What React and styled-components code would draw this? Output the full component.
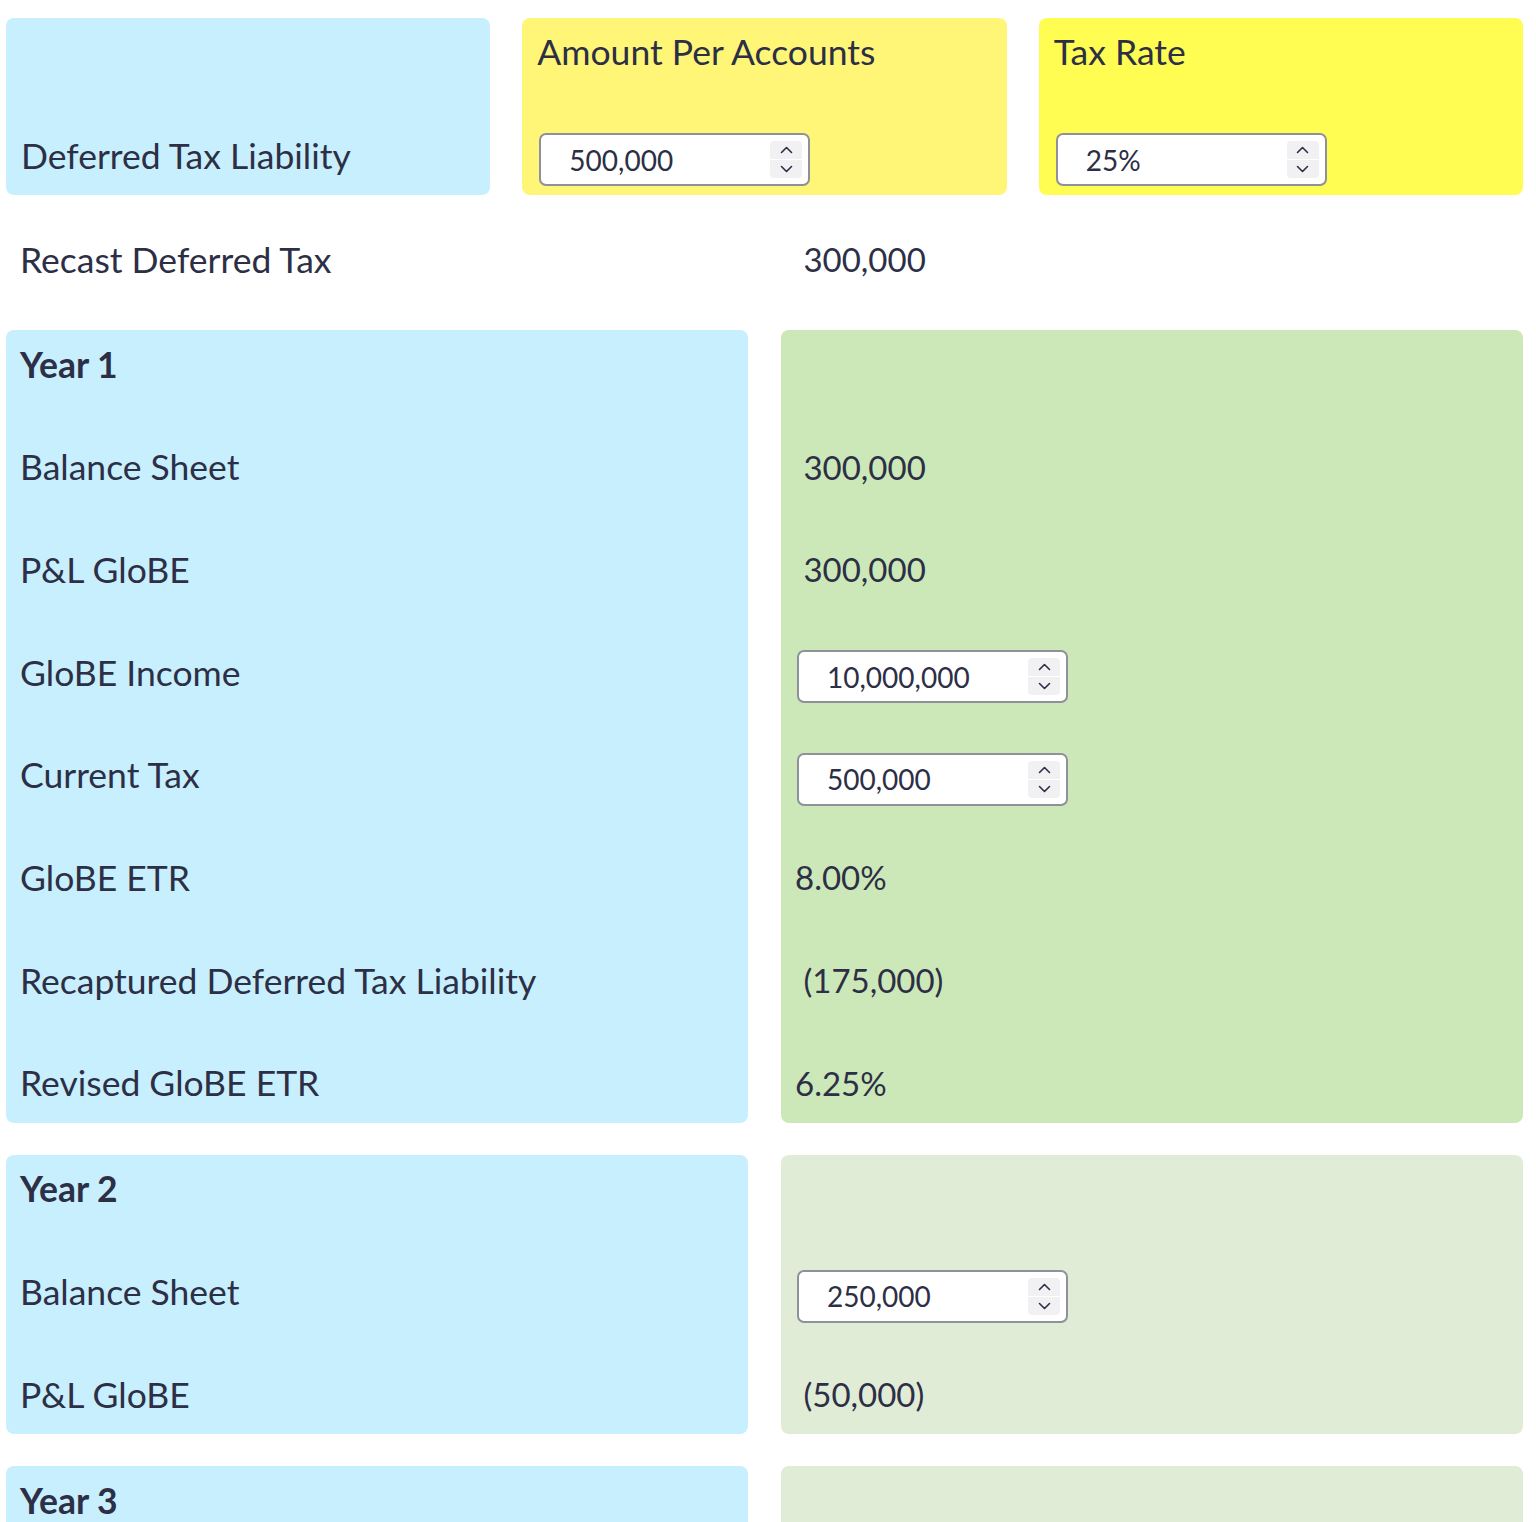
import React from "react";
import styled, { createGlobalStyle } from "styled-components";

const COLORS = {
  ink: "#2c2f45",
  sky: "#c8effd",
  lemon: "#fff677",
  yellow: "#fffc52",
  leaf: "#cde8b8",
  mist: "#e1ecd6",
  border: "#8e909b",
  spin: "#f1f1f3",
};

const GlobalStyle = createGlobalStyle({
  body: {
    margin: 0,
    background: "#ffffff",
    color: COLORS.ink,
    fontFamily: 'Lato, "Noto Sans", sans-serif',
  },
});

const Page = styled.div({
  padding: "18px 13px 0 6px",
  boxSizing: "border-box",
  width: 1536,
  height: 1522,
  overflow: "hidden",
});

const TopRow = styled.div({
  display: "grid",
  gridTemplateColumns: "repeat(3, 1fr)",
  columnGap: 32,
  height: 177,
});

const TopCard = styled.div(({ tone, bottom }) => ({
  background: tone,
  borderRadius: 8,
  padding: bottom ? "9px 15px 12px" : "9px 15px 10px",
  boxSizing: "border-box",
  display: "flex",
  flexDirection: "column",
  justifyContent: bottom ? "flex-end" : "space-between",
}));

const Grid = styled.div({
  display: "grid",
  gridTemplateColumns: "1fr 1fr",
  columnGap: 33,
});

const RecastGrid = styled(Grid)({
  margin: "40px 0 43px",
});

const Sections = styled.div({
  display: "flex",
  flexDirection: "column",
  gap: 32,
});

const Card = styled.div(({ tone }) => ({
  background: tone,
  borderRadius: 8,
  padding: "10px 15px 12px 14px",
  display: "flex",
  flexDirection: "column",
  gap: 50.7,
}));

const ValueCard = styled(Card)({
  paddingLeft: 14,
});

const Row = styled.div({
  height: 52,
  boxSizing: "border-box",
  display: "flex",
  alignItems: "center",
  whiteSpace: "pre",
});

const Label = styled(Row)(({ pad }) => ({
  fontSize: 35.5,
  paddingBottom: 4,
  paddingLeft: pad || 0,
}));

const Heading = styled(Label)({
  fontWeight: 700,
});

const Value = styled(Label)({
  fontSize: 33,
});

const InputRow = styled(Row)(({ drop }) => ({
  paddingTop: drop || 0,
  alignItems: "flex-start",
}));

const InputBox = styled.div({
  width: 271,
  height: 53,
  marginLeft: 2,
  boxSizing: "border-box",
  border: `2px solid ${COLORS.border}`,
  borderRadius: 7,
  background: "#ffffff",
  display: "flex",
  alignItems: "center",
  padding: "0 6px 0 28px",
  flexShrink: 0,
});

const Field = styled.input({
  flex: 1,
  minWidth: 0,
  border: "none",
  outline: "none",
  background: "transparent",
  fontFamily: "inherit",
  fontSize: 28,
  color: COLORS.ink,
  padding: 0,
});

const Spinner = styled.div({
  width: 32,
  height: 37,
  display: "flex",
  flexDirection: "column",
  gap: 1,
  borderRadius: 4,
  overflow: "hidden",
});

const SpinButton = styled.div({
  flex: 1,
  background: COLORS.spin,
  display: "flex",
  alignItems: "center",
  justifyContent: "center",
});

function Chevron({ up }) {
  return (
    <svg width="13" height="8" viewBox="0 0 13 8">
      <path
        d={up ? "M1.5 6.5 L6.5 1.5 L11.5 6.5" : "M1.5 1.5 L6.5 6.5 L11.5 1.5"}
        fill="none"
        stroke={COLORS.ink}
        strokeWidth="1.6"
        strokeLinecap="round"
        strokeLinejoin="round"
      />
    </svg>
  );
}

function NumberInput({ value, drop }) {
  return (
    <InputRow drop={drop}>
      <InputBox>
        <Field defaultValue={value} />
        <Spinner>
          <SpinButton>
            <Chevron up />
          </SpinButton>
          <SpinButton>
            <Chevron />
          </SpinButton>
        </Spinner>
      </InputBox>
    </InputRow>
  );
}

const YEARS = [
  {
    title: "Year 1",
    tone: COLORS.leaf,
    rows: [
      { label: "Balance Sheet", value: " 300,000" },
      { label: "P&L GloBE", value: " 300,000" },
      { label: "GloBE Income", input: "10,000,000" },
      { label: "Current Tax", input: "500,000" },
      { label: "GloBE ETR", value: "8.00%" },
      { label: "Recaptured Deferred Tax Liability", value: " (175,000)" },
      { label: "Revised GloBE ETR", value: "6.25%" },
    ],
  },
  {
    title: "Year 2",
    tone: COLORS.mist,
    rows: [
      { label: "Balance Sheet", input: "250,000" },
      { label: "P&L GloBE", value: " (50,000)" },
    ],
  },
  {
    title: "Year 3",
    tone: COLORS.mist,
    rows: [
      { label: "Balance Sheet", input: "125,000" },
      { label: "P&L GloBE", value: " (25,000)" },
    ],
  },
];

function YearSection({ year }) {
  return (
    <Grid>
      <Card tone={COLORS.sky}>
        <Heading>{year.title}</Heading>
        {year.rows.map((r) => (
          <Label key={r.label}>{r.label}</Label>
        ))}
      </Card>
      <ValueCard tone={year.tone}>
        <Row />
        {year.rows.map((r) =>
          r.input ? (
            <NumberInput key={r.label} value={r.input} drop={2} />
          ) : (
            <Value key={r.label}>{r.value}</Value>
          )
        )}
      </ValueCard>
    </Grid>
  );
}

export default function App() {
  return (
    <>
      <GlobalStyle />
      <Page>
        <TopRow>
          <TopCard tone={COLORS.sky} bottom>
            <Label>Deferred Tax Liability</Label>
          </TopCard>
          <TopCard tone={COLORS.lemon}>
            <Label>Amount Per Accounts</Label>
            <NumberInput value="500,000" />
          </TopCard>
          <TopCard tone={COLORS.yellow}>
            <Label>Tax Rate</Label>
            <NumberInput value="25%" />
          </TopCard>
        </TopRow>

        <RecastGrid>
          <Label pad={14}>Recast Deferred Tax</Label>
          <Value pad={14}>{" 300,000"}</Value>
        </RecastGrid>

        <Sections>
          {YEARS.map((y) => (
            <YearSection key={y.title} year={y} />
          ))}
        </Sections>
      </Page>
    </>
  );
}
